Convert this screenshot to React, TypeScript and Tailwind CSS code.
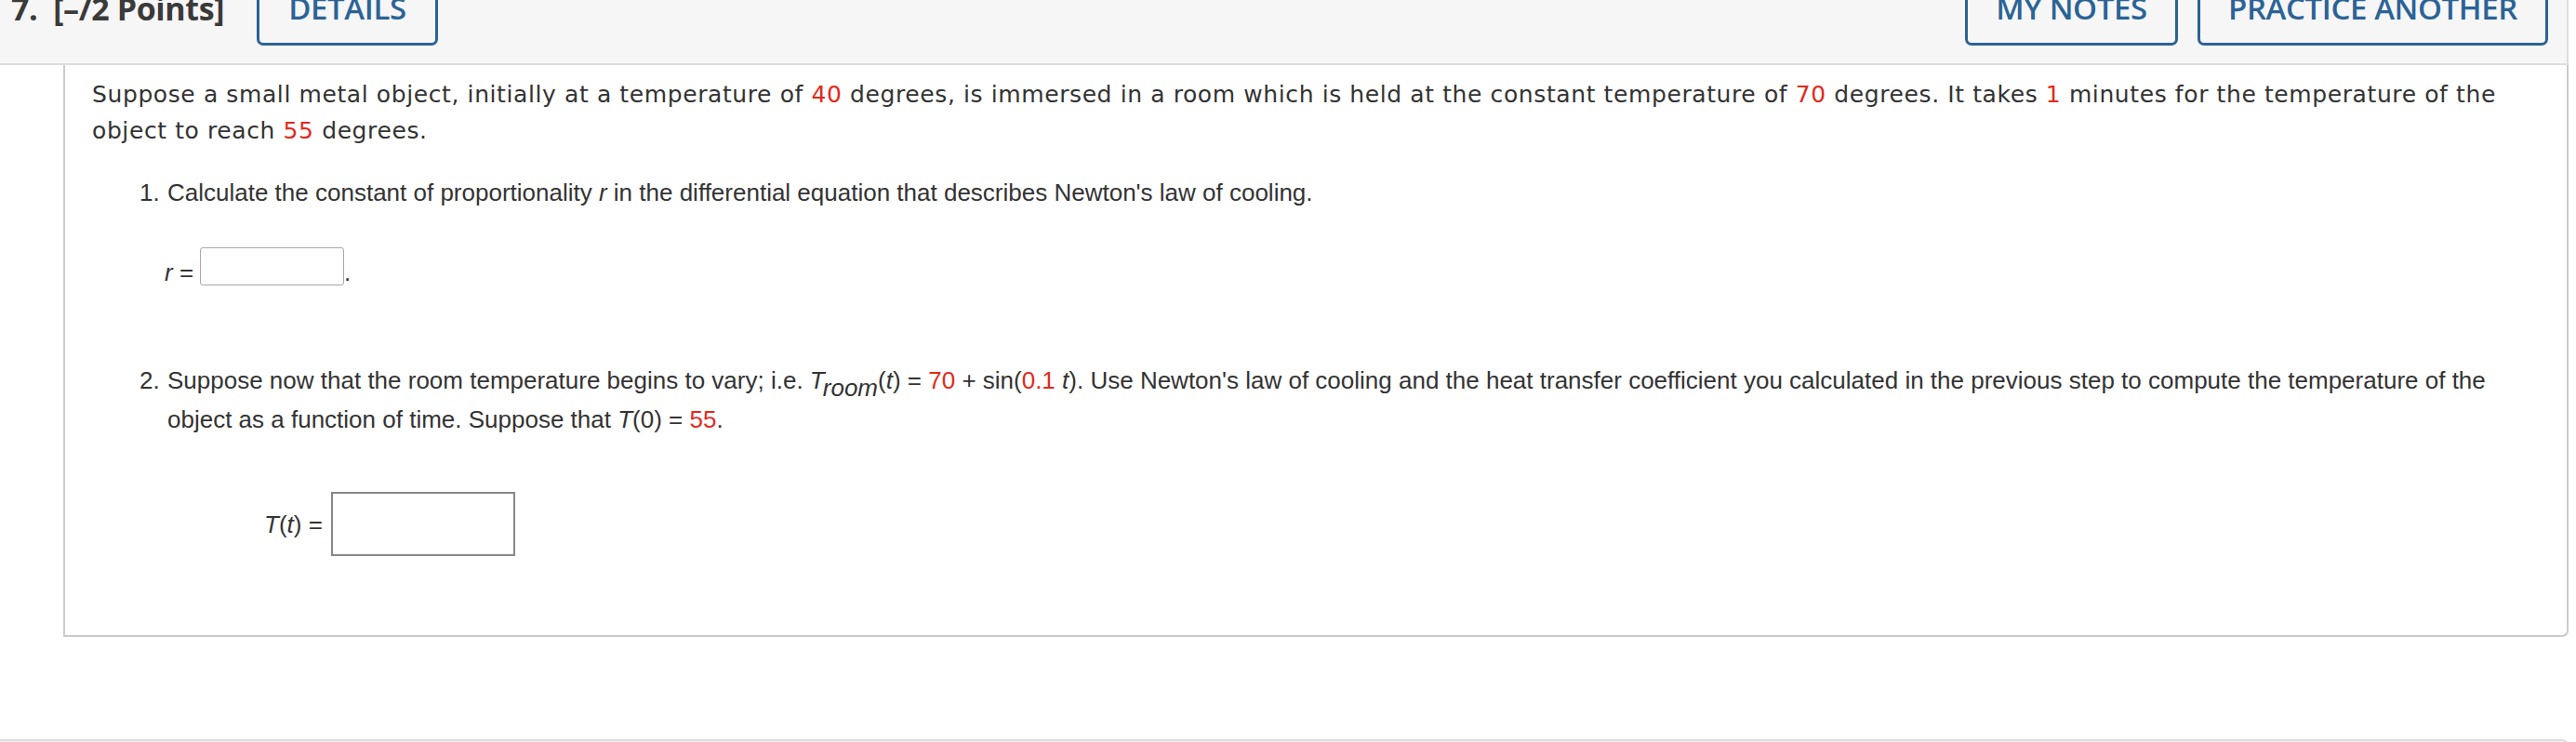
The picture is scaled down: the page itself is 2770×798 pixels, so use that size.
import React from "react";

const RED = "text-[#e5281c]";

function HeaderButton({ label, w }: { label: string; w: string }) {
  return (
    <div
      className={`${w} h-[89px] -mt-[40px] border-[3px] border-[#2b6396] rounded-b-[7px] flex items-end justify-center pb-[21px] shrink-0`}
    >
      <span className="text-[33px] leading-none font-semibold text-[#2b6396] tracking-[-0.4px]">{label}</span>
    </div>
  );
}

export default function App() {
  return (
    <div className="w-[2770px] h-[798px] bg-white overflow-hidden text-[#333]">
      <div className="w-[2762px]">
        {/* header */}
        <div
          className="h-[70px] bg-[#f6f6f6] border-b-2 border-r-2 border-[#dddddd] flex items-start overflow-hidden"
          style={{ fontFamily: '"Open Sans", sans-serif' }}
        >
          <div className="ml-[12px] -mt-[8px] text-[34px] leading-none font-bold text-[#3a3a3a] whitespace-pre tracking-[-0.4px]">
            {"7.  [–/2 Points]"}
          </div>
          <div className="ml-[35px]">
            <HeaderButton label="DETAILS" w="w-[195px]" />
          </div>
          <div className="ml-auto mr-[20px] flex gap-[21px]">
            <HeaderButton label="MY NOTES" w="w-[229px]" />
            <HeaderButton label="PRACTICE ANOTHER" w="w-[377px]" />
          </div>
        </div>

        {/* card */}
        <div className="ml-[68px] h-[615px] border-l-2 border-r-2 border-b-2 border-[#cccccc] rounded-br-[7px] pl-[29px] pr-[30px] pt-[12px]">
          <p
            className="text-[25px] leading-[39px] text-[#333] tracking-[0.6px]"
            style={{ fontFamily: '"DejaVu Sans", Verdana, sans-serif' }}
          >
            Suppose a small metal object, initially at a temperature of <span className={RED}>40</span> degrees, is
            immersed in a room which is held at the constant temperature of <span className={RED}>70</span> degrees.
            It takes <span className={RED}>1</span> minutes for the temperature of the object to reach{" "}
            <span className={RED}>55</span> degrees.
          </p>

          <div
            className="mt-[27px] text-[26px] leading-[40px] text-[#333]"
            style={{ fontFamily: '"Liberation Sans", Arial, sans-serif' }}
          >
            {/* item 1 */}
            <div className="flex ml-[51px]">
              <span className="w-[30px] shrink-0">1.</span>
              <div className="flex-1">
                <div>
                  Calculate the constant of proportionality <i>r</i> in the differential equation that describes
                  Newton's law of cooling.
                </div>
                <div className="mt-[39px] flex items-end -ml-[3px]">
                  <span className="mb-[2px] leading-[24px]">
                    <i>r</i> =
                  </span>
                  <span className="ml-[7px] inline-block w-[155px] h-[41px] border border-[#a8a8a8] rounded-[3px] bg-white" />
                  <span className="mb-[2px] leading-[24px]">.</span>
                </div>
              </div>
            </div>

            {/* item 2 */}
            <div className="flex ml-[51px] mt-[81px]">
              <span className="w-[30px] shrink-0 leading-[42px]">2.</span>
              <div className="flex-1 leading-[42px]">
                <div className="pr-[20px]">
                  Suppose now that the room temperature begins to vary; i.e. <i>T</i>
                  <i className="relative top-[8px]">room</i>(<i>t</i>) = <span className={RED}>70</span> + sin(
                  <span className={RED}>0.1</span> <i>t</i>). Use Newton's law of cooling and the heat transfer
                  coefficient you calculated in the previous step to compute the temperature of the object as a
                  function of time. Suppose that <i>T</i>(0) = <span className={RED}>55</span>.
                </div>
                <div className="mt-[57px] ml-[104px] flex items-end">
                  <span className="mb-[22px] leading-[24px]">
                    <i>T</i>(<i>t</i>) =
                  </span>
                  <span className="ml-[9px] inline-block w-[198px] h-[69px] border-2 border-[#888888] bg-white" />
                </div>
              </div>
            </div>
          </div>
        </div>

        {/* next question header edge */}
        <div className="mt-[110px] h-[20px] bg-[#f6f6f6] border-t-2 border-r-2 border-[#dddddd] rounded-tr-[7px]" />
      </div>
    </div>
  );
}
